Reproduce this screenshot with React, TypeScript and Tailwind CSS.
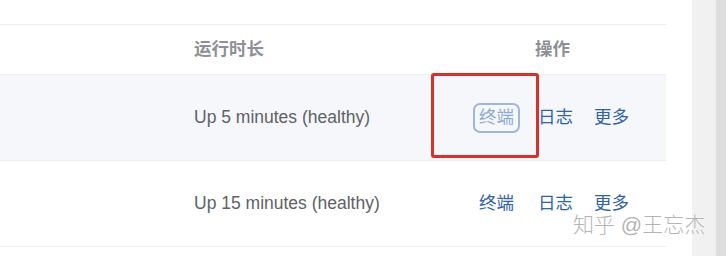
const FONT = "font-['Liberation_Sans','Noto_Sans_CJK_SC',sans-serif]";

type Row = { uptime: string; focused?: boolean; shaded?: boolean };

const ROWS: Row[] = [
  { uptime: "Up 5 minutes (healthy)", focused: true, shaded: true },
  { uptime: "Up 15 minutes (healthy)" },
];

function Actions({ focused }: { focused?: boolean }) {
  return (
    <div className="flex items-center pl-[42px] text-[17.5px] leading-none text-[#2f62ab]">
      <span
        className={
          focused
            ? "flex h-[30px] w-[47px] items-center justify-center rounded-[7px] border-2 border-[#9fb7da] text-[#8eaad1]"
            : "flex h-[30px] w-[47px] items-center justify-center border-2 border-transparent"
        }
      >
        终端
      </span>
      <span className="ml-[18px]">日志</span>
      <span className="ml-[21px]">更多</span>
    </div>
  );
}

export default function App() {
  return (
    <div className={`relative flex h-[256px] w-[726px] overflow-hidden bg-white ${FONT}`}>
      <div className="w-[666px]">
        <div className="h-[25px] border-b border-[#ebeef5]" />
        <div className="grid h-[50px] grid-cols-[194px_237px_1fr] items-center border-b border-[#ebeef5] text-[17.5px] font-bold text-[#8e9096]">
          <div />
          <div>运行时长</div>
          <div className="pl-[104px]">操作</div>
        </div>
        {ROWS.map((row) => (
          <div
            key={row.uptime}
            className={`grid h-[86px] grid-cols-[194px_237px_1fr] items-center border-b border-[#ebeef5] ${
              row.shaded ? "bg-[#f5f7fa]" : "bg-white"
            }`}
          >
            <div />
            <div className="text-[17.5px] text-[#606266]">{row.uptime}</div>
            <Actions focused={row.focused} />
          </div>
        ))}
      </div>
      <div className="w-[26px] bg-white" />
      <div className="w-[24px] bg-[#f1f1f1]" />
      <div className="w-[10px] bg-[#dedede]" />

      {/* annotation box */}
      <div className="absolute left-[431px] top-[73px] h-[85px] w-[108px] rounded-[3px] border-[3px] border-[#d8302a]" />

      {/* watermark */}
      <div className="absolute left-[573px] top-[214px] text-[21px] font-light leading-none text-[#b4b4b4] [text-shadow:0_0_2px_#fff]">
        知乎 @王忘杰
      </div>
    </div>
  );
}
